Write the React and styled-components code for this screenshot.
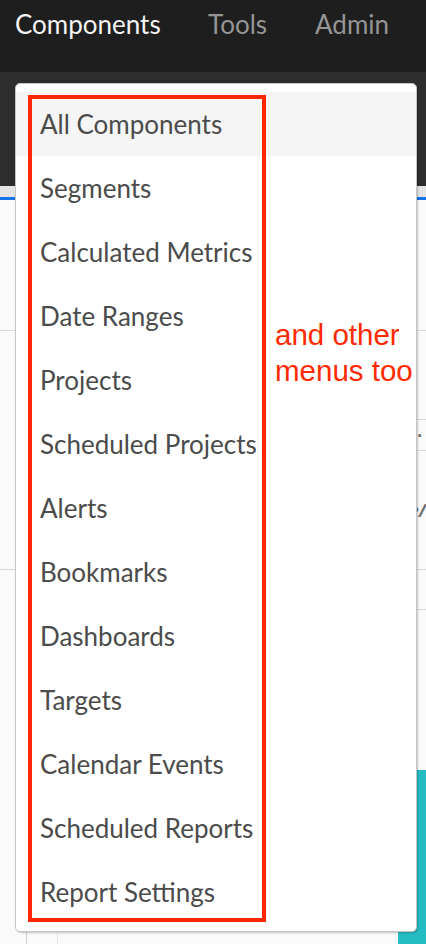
import React from "react";
import styled, { createGlobalStyle } from "styled-components";

const GlobalStyle = createGlobalStyle`
  html, body {
    margin: 0;
    padding: 0;
  }
  body {
    width: 426px;
    height: 944px;
    overflow: hidden;
    background: #fafafa;
    font-family: Lato, "Open Sans", "Noto Sans", sans-serif;
  }
  * { box-sizing: border-box; }
`;

const Shell = styled.div`
  position: relative;
  width: 426px;
  height: 944px;
  overflow: hidden;
  display: flex;
  flex-direction: column;
  background: #fafafa;
`;

const TopNav = styled.nav`
  height: 72px;
  flex: none;
  background: #1e1e1e;
  display: grid;
  grid-template-columns: 193px 107px auto;
  align-items: start;
  padding: 6px 0 0 15px;
`;

const NavItem = styled.span`
  font-size: 26px;
  line-height: 36px;
  color: ${(p) => (p.$active ? "#f4f4f4" : "#959595")};
  white-space: nowrap;
`;

const Toolbar = styled.div`
  height: 114px;
  flex: none;
  background: #2d2d2d;
`;

const TabStrip = styled.div`
  height: 14px;
  flex: none;
  background: #e4e4e4;
  border-bottom: 3px solid #1473e6;
`;

const Workspace = styled.div`
  flex: 1;
  display: flex;
  min-height: 0;
`;

const Rail = styled.div`
  width: 58px;
  flex: none;
  display: flex;
  flex-direction: column;
  border-right: 1px solid #e6e6e6;
  background: #fafafa;
`;

const RailRow = styled.div`
  height: ${(p) => p.$h}px;
  flex: ${(p) => (p.$h ? "none" : "1")};
  border-bottom: ${(p) => (p.$line ? "1px solid #d8d8d8" : "none")};
  display: flex;
  justify-content: flex-start;
`;

const RailTick = styled.div`
  width: 27px;
  height: 100%;
  border-right: 1px solid #d0d0d0;
`;

const Grid = styled.div`
  flex: 1;
  display: flex;
  flex-direction: column;
  background: #fafafa;
`;

const GridRow = styled.div`
  height: ${(p) => p.$h}px;
  flex: none;
  border-bottom: ${(p) => (p.$line ? "1px solid #d8d8d8" : "none")};
  display: flex;
  justify-content: flex-end;
  align-items: center;
  font-size: 17px;
  color: #666;
`;

const CellText = styled.span`
  font-family: "Open Sans", sans-serif;
  font-style: ${(p) => (p.$italic ? "italic" : "normal")};
  font-weight: ${(p) => (p.$bold ? 700 : 400)};
  color: ${(p) => p.$color || "#6e6e6e"};
  white-space: nowrap;
  padding-right: ${(p) => p.$pr || 0}px;
`;

const Accent = styled.div`
  flex: 1;
  display: flex;
  justify-content: flex-end;
`;

const AccentBlock = styled.div`
  width: 28px;
  height: 100%;
  background: #25bbc3;
`;

/* Dropdown opened from the Components tab */
const Menu = styled.div`
  position: absolute;
  left: 15px;
  top: 83px;
  width: 402px;
  height: 849px;
  background: #ffffff;
  border: 1px solid #c6c6c6;
  border-radius: 5px;
  box-shadow: 1px 1px 2px rgba(0, 0, 0, 0.22);
  padding: 8px 0;
  display: flex;
  flex-direction: column;
`;

const MenuItem = styled.div`
  height: 64px;
  flex: none;
  display: flex;
  align-items: center;
  padding-left: 24px;
  font-size: 26px;
  color: #4b4b4b;
  background: ${(p) => (p.$active ? "#f5f5f5" : "transparent")};
  white-space: nowrap;
`;

const Highlight = styled.div`
  position: absolute;
  left: 12px;
  top: 11px;
  width: 238px;
  height: 827px;
  border: 4px solid #ff2600;
  pointer-events: none;
`;

const Note = styled.div`
  position: absolute;
  left: 259px;
  top: 233px;
  font-family: "Liberation Sans", Arial, sans-serif;
  font-size: 29.5px;
  line-height: 36px;
  color: #ff2a00;
  white-space: nowrap;
`;

const items = [
  "All Components",
  "Segments",
  "Calculated Metrics",
  "Date Ranges",
  "Projects",
  "Scheduled Projects",
  "Alerts",
  "Bookmarks",
  "Dashboards",
  "Targets",
  "Calendar Events",
  "Scheduled Reports",
  "Report Settings",
];

export default function App() {
  return (
    <>
      <GlobalStyle />
      <Shell>
        <TopNav>
          <NavItem $active>Components</NavItem>
          <NavItem>Tools</NavItem>
          <NavItem>Admin</NavItem>
        </TopNav>
        <Toolbar />
        <TabStrip />
        <Workspace>
          <Rail>
            <RailRow $h={131} $line />
            <RailRow $h={239} $line />
            <RailRow>
              <RailTick />
            </RailRow>
          </Rail>
          <Grid>
            <GridRow $h={131} $line />
            <GridRow $h={89} $line />
            <GridRow $h={31} $line>
              <CellText $bold $pr={4}>·</CellText>
            </GridRow>
            <GridRow $h={119} $line>
              <CellText $italic $bold $pr={0}>ge/</CellText>
            </GridRow>
            <GridRow $h={40} $line />
            <GridRow $h={160} />
            <Accent>
              <AccentBlock />
            </Accent>
          </Grid>
        </Workspace>

        <Menu>
          {items.map((label, i) => (
            <MenuItem key={label} $active={i === 0}>
              {label}
            </MenuItem>
          ))}
          <Highlight />
          <Note>
            and other
            <br />
            menus too
          </Note>
        </Menu>
      </Shell>
    </>
  );
}
